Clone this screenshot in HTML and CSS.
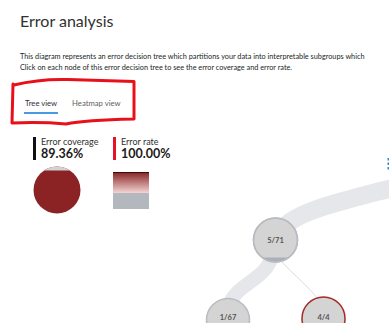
FILE: index.html
```html
<!DOCTYPE html>
<html>
<head>
<meta charset="utf-8">
<link rel="stylesheet" href="styles.css">
</head>
<body>
<div class="page">
  <h1 class="title">Error analysis</h1>
  <p class="desc">This diagram represents an error decision tree which partitions your data into interpretable subgroups which<br>Click on each node of this error decision tree to see the error coverage and error rate.</p>
  <div class="tabs">
    <span class="tab active">Tree view</span>
    <span class="tab">Heatmap view</span>
  </div>
  <div class="main">
    <svg class="tree" viewBox="0 125 389 198" width="389" height="198">
      <defs>
        <clipPath id="n1"><circle cx="275.5" cy="240" r="22"/></clipPath>
      </defs>
      <path class="link" d="M 280 232 C 292 212, 335 203, 400 186" stroke-width="18"/>
      <path class="link" d="M 272 256 C 266 280, 236 284, 229 305" stroke-width="14"/>
      <path class="thin" d="M 282 262 C 295 276, 308 286, 318 299"/>
      <g>
        <circle cx="275.5" cy="240" r="22" class="node"/>
        <rect x="250" y="257.5" width="52" height="8" fill="#aab0b7" clip-path="url(#n1)"/>
        <circle cx="275.5" cy="240" r="22" class="node-ring"/>
        <text x="275.5" y="243" class="ntext">5/71</text>
      </g>
      <g>
        <circle cx="228" cy="320" r="21.5" class="node"/>
        <text x="228" y="320" class="ntext">1/67</text>
      </g>
      <g>
        <circle cx="323.5" cy="318.5" r="21.5" class="node red"/>
        <text x="323.5" y="320" class="ntext">4/4</text>
      </g>
      <path class="blue" d="M 388.5 158 L 388.5 171"/>
    </svg>
    <div class="legend">
      <div class="metric">
        <div class="mbar black"></div>
        <div class="mtext">
          <div class="mlabel">Error coverage</div>
          <div class="mval">89.36%</div>
        </div>
      </div>
      <div class="metric">
        <div class="mbar red"></div>
        <div class="mtext">
          <div class="mlabel">Error rate</div>
          <div class="mval">100.00%</div>
        </div>
      </div>
      <svg class="pie" width="48" height="48" viewBox="0 0 48 48">
        <defs><clipPath id="pc"><circle cx="24" cy="24" r="23.5"/></clipPath></defs>
        <g clip-path="url(#pc)">
          <rect width="48" height="48" fill="#8b2224"/>
          <rect width="48" height="4.5" fill="#d2d2d2"/>
        </g>
      </svg>
      <div class="rate"></div>
    </div>
  </div>
</div>
<svg class="annot" width="389" height="323" viewBox="0 0 389 323">
  <path d="M 14 85 C 30 81, 50 79, 68 79.5 C 95 80.5, 115 81, 134 81.5 L 134 119 C 110 119.5, 85 120, 66 124 C 55 123, 35 122, 12 123 L 13 84" />
</svg>
</body>
</html>
```
FILE: styles.css
```css
body {
  margin: 0;
  background: #ffffff;
  font-family: Lato, "Open Sans", sans-serif;
  color: #323130;
  width: 389px;
  height: 323px;
  overflow: hidden;
  position: relative;
}
.page {
  padding-left: 20px;
}
.title {
  margin: 0;
  padding-top: 11px;
  font-size: 16px;
  line-height: 20px;
  font-weight: 400;
  color: #323130;
}
.desc {
  margin: 19.5px 0 0;
  font-size: 7.3px;
  line-height: 11px;
  white-space: nowrap;
  color: #201f1e;
}
.tabs {
  display: flex;
  gap: 13px;
  margin-top: 24.5px;
  padding-left: 4px;
}
.tab {
  font-size: 7.7px;
  line-height: 12px;
  padding: 0 1px 3px;
  border-bottom: 2px solid transparent;
  color: #605e5c;
}
.tab.active {
  color: #323130;
  border-bottom-color: #4a9ae3;
}
.main {
  display: grid;
  margin-top: 11px;
  margin-left: -20px;
}
.tree,
.legend {
  grid-area: 1 / 1;
}
.tree {
  display: block;
}
.link {
  fill: none;
  stroke: #e6e7ea;
}
.thin {
  fill: none;
  stroke: #dcdcdc;
  stroke-width: 1;
}
.node {
  fill: #d4d4d4;
  stroke: #b8bcc2;
  stroke-width: 1.5;
}
.node.red {
  stroke: #a52a2a;
}
.node-ring {
  fill: none;
  stroke: #b8bcc2;
  stroke-width: 1.5;
}
.ntext {
  font-family: Lato, "Open Sans", sans-serif;
  font-size: 7.5px;
  font-weight: 700;
  fill: #555555;
  text-anchor: middle;
}
.blue {
  stroke: #2b88d8;
  stroke-width: 2;
  stroke-dasharray: 2.5 2;
}
.legend {
  align-self: start;
  justify-self: start;
  display: grid;
  grid-template-columns: 80px auto;
  align-items: center;
  row-gap: 5px;
  padding: 11px 0 0 33px;
}
.metric {
  display: flex;
  align-items: center;
  gap: 5px;
  align-self: start;
}
.mbar {
  width: 3px;
  height: 23px;
}
.mbar.black {
  background: #111111;
}
.mbar.red {
  background: #e8112d;
}
.mtext {
  display: flex;
  flex-direction: column;
}
.mlabel {
  font-size: 9px;
  line-height: 11px;
  color: #323130;
}
.mval {
  font-size: 12.5px;
  line-height: 15px;
  margin-top: -1px;
  font-weight: 700;
  color: #1b1a19;
}
.pie {
  display: block;
}
.rate {
  width: 36px;
  height: 37px;
  background: linear-gradient(to bottom, #3a0d0d 0, #3a0d0d 1px, #8c2a2a 1px, #f4d6d6 57%, #b3b8bf 57%, #b3b8bf 100%);
}
.annot {
  position: absolute;
  top: 0;
  left: 0;
  pointer-events: none;
}
.annot path {
  fill: none;
  stroke: #e8101a;
  stroke-width: 3;
  stroke-linejoin: round;
  stroke-linecap: round;
}
```
